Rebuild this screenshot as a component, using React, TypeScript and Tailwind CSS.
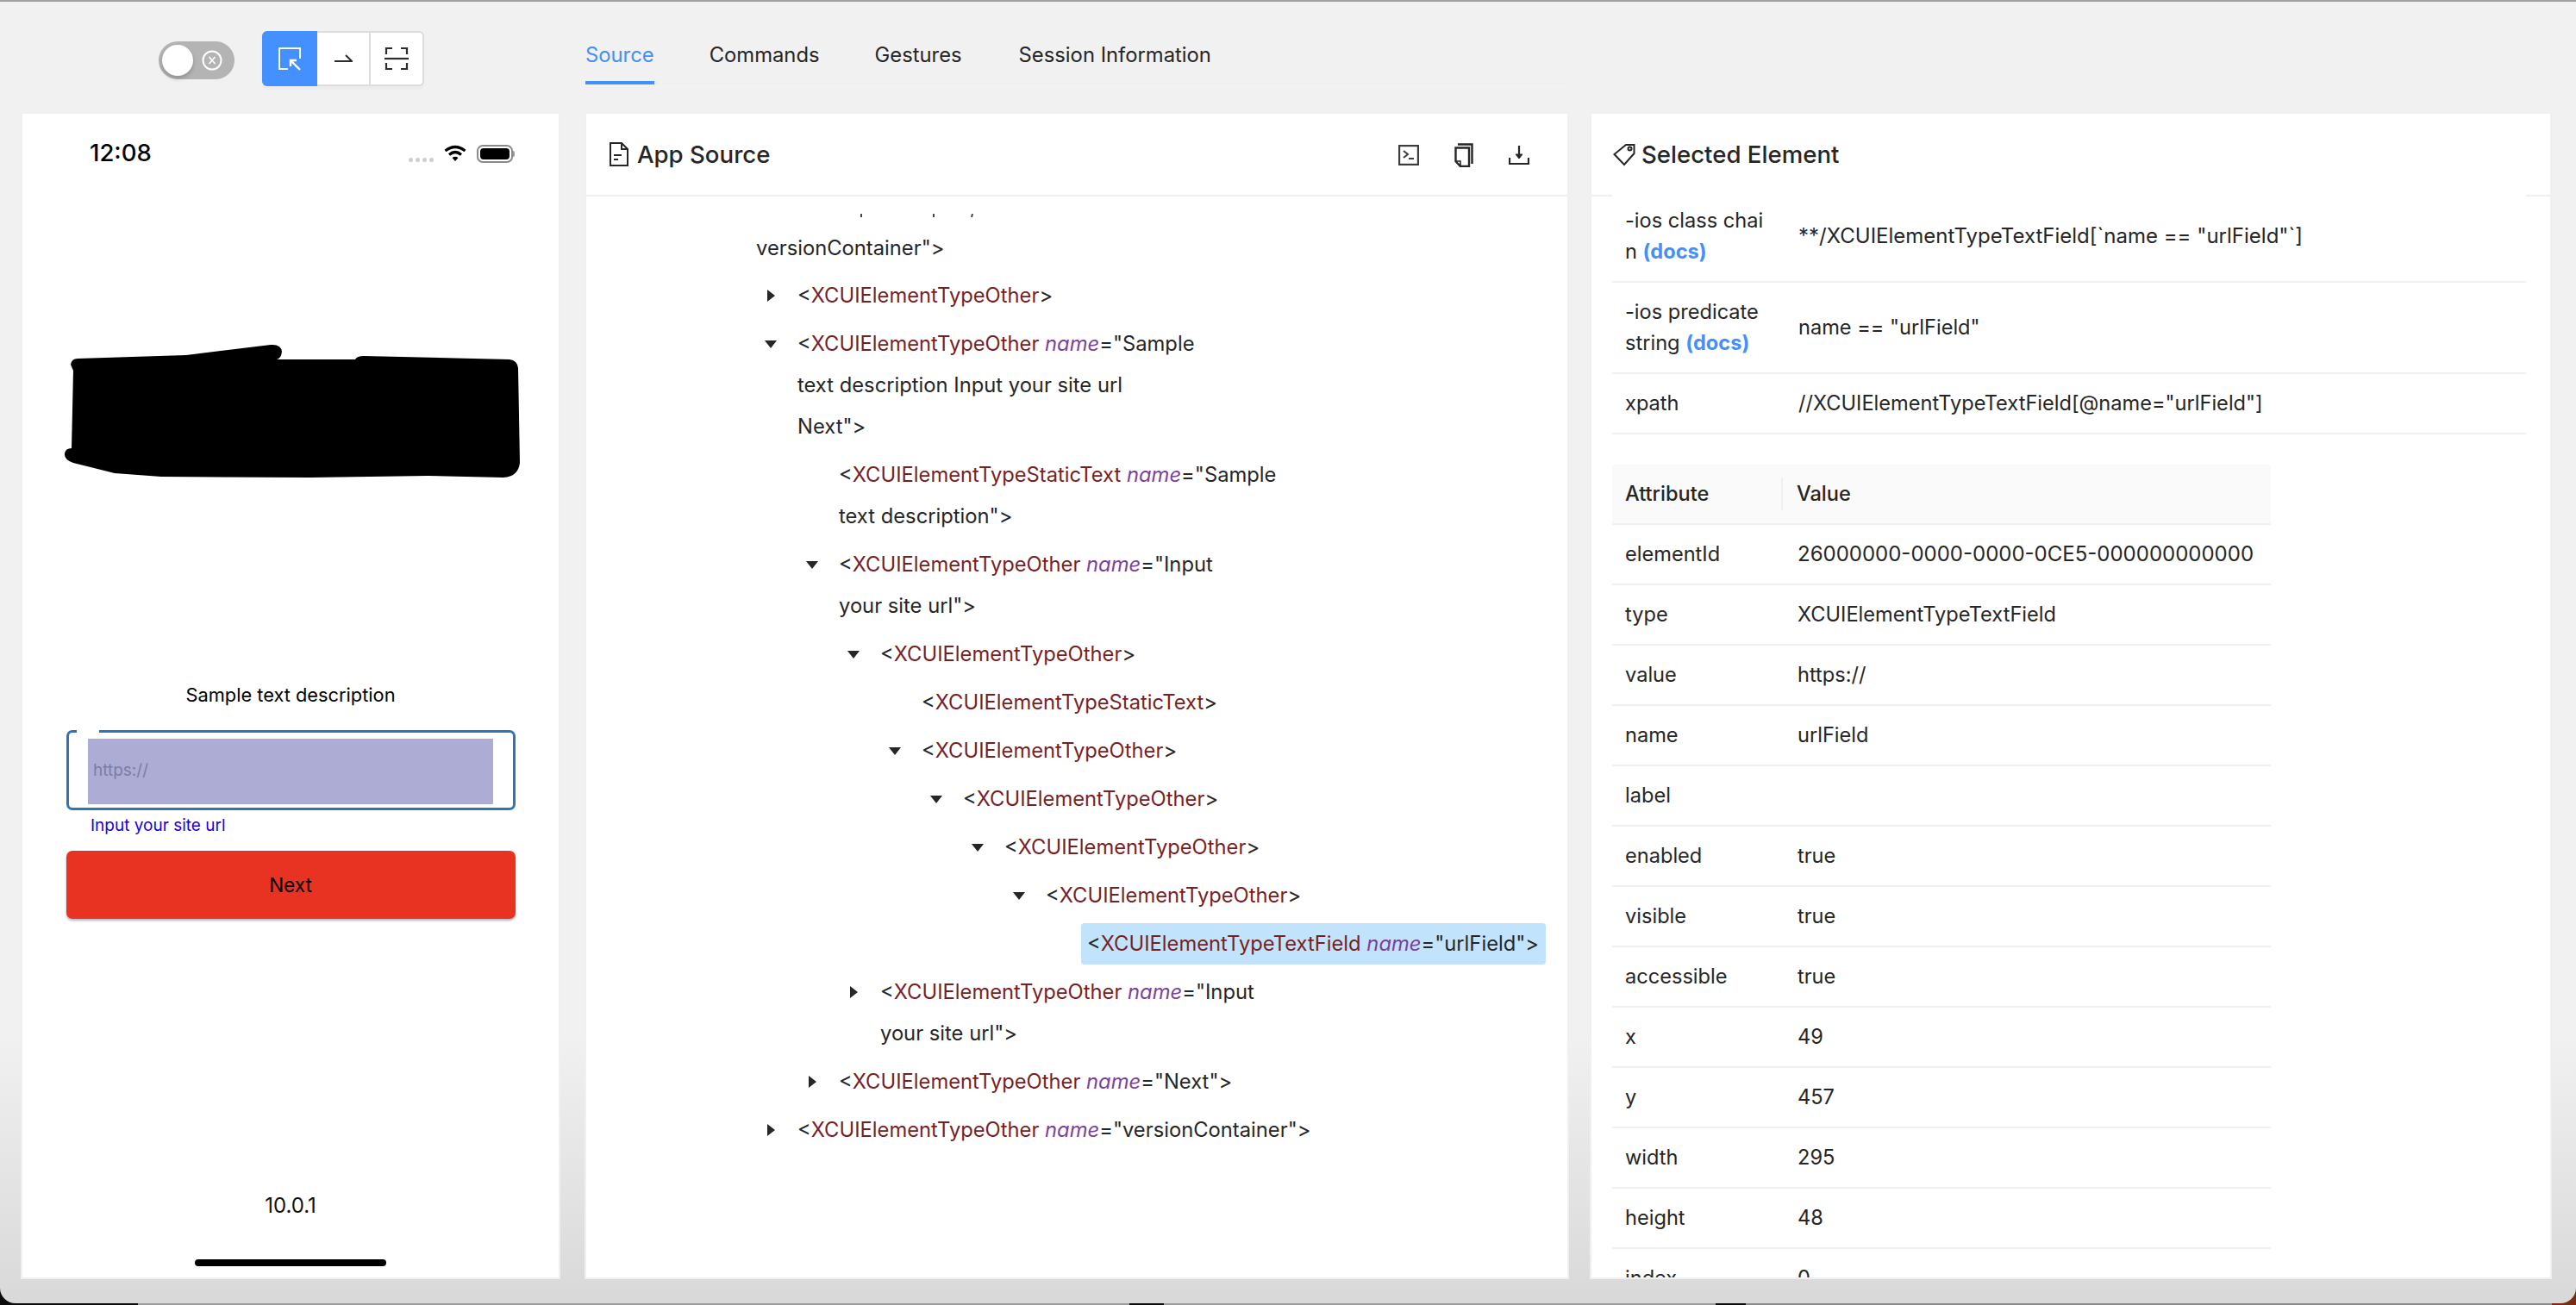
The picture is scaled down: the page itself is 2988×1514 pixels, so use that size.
const indent = [
  'ml-[0px]',
  'ml-[48px]',
  'ml-[96px]',
  'ml-[144px]',
  'ml-[192px]',
  'ml-[240px]',
  'ml-[288px]',
  'ml-[336px]',
];

type TreeRowProps = {
  level: number;
  arrow?: 'open' | 'closed';
  tag: string;
  name?: string;
  extra?: string[];
  selected?: boolean;
};

function Tag({ tag, name }: { tag: string; name?: string }) {
  return (
    <>
      &lt;<span className="text-[#791f1f]">{tag}</span>
      {name !== undefined && (
        <>
          {' '}
          <span className="italic text-[#7c3f9e]">name</span>=&quot;{name}
        </>
      )}
    </>
  );
}

function TreeRow({ level, arrow, tag, name, extra, selected }: TreeRowProps) {
  const closesOnFirst = !extra;
  return (
    <div className={`flex py-[4px] ${indent[level]}`}>
      <div className="flex h-[48px] w-[34px] shrink-0 items-center justify-center">
        {arrow === 'closed' && <div className="h-0 w-0 border-y-[7px] border-l-[9px] border-y-transparent border-l-[#262626]" />}
        {arrow === 'open' && <div className="h-0 w-0 border-x-[7px] border-t-[9px] border-x-transparent border-t-[#262626]" />}
      </div>
      <div className={selected ? 'ml-[7px] rounded-[4px] bg-[#c1e4fc] px-[7px] pr-[8px] leading-[48px]' : 'ml-[14px] leading-[48px]'}>
        <div>
          <Tag tag={tag} name={name} />
          {closesOnFirst ? (name !== undefined ? '">' : '>') : ''}
        </div>
        {extra?.map((line) => (
          <div key={line}>{line}</div>
        ))}
      </div>
    </div>
  );
}

function SourceTree() {
  return (
    <div className="h-full overflow-hidden pl-[197px] text-[23.75px] text-[#262626]">
      <svg className="ml-[120px] mt-[20px] block" width="136" height="5" viewBox="0 0 136 5">
        <path d="M2 0v4M86 0v4M131 0l-1 4" stroke="#444" strokeWidth="2" fill="none" />
      </svg>
      <div className="pb-[3px] pt-[11px] leading-[48px]">versionContainer&quot;&gt;</div>
      <TreeRow level={0} arrow="closed" tag="XCUIElementTypeOther" />
      <TreeRow level={0} arrow="open" tag="XCUIElementTypeOther" name="Sample" extra={['text description Input your site url', 'Next">']} />
      <TreeRow level={1} tag="XCUIElementTypeStaticText" name="Sample" extra={['text description">']} />
      <TreeRow level={1} arrow="open" tag="XCUIElementTypeOther" name="Input" extra={['your site url">']} />
      <TreeRow level={2} arrow="open" tag="XCUIElementTypeOther" />
      <TreeRow level={3} tag="XCUIElementTypeStaticText" />
      <TreeRow level={3} arrow="open" tag="XCUIElementTypeOther" />
      <TreeRow level={4} arrow="open" tag="XCUIElementTypeOther" />
      <TreeRow level={5} arrow="open" tag="XCUIElementTypeOther" />
      <TreeRow level={6} arrow="open" tag="XCUIElementTypeOther" />
      <TreeRow level={7} tag="XCUIElementTypeTextField" name="urlField" selected />
      <TreeRow level={2} arrow="closed" tag="XCUIElementTypeOther" name="Input" extra={['your site url">']} />
      <TreeRow level={1} arrow="closed" tag="XCUIElementTypeOther" name="Next" />
      <TreeRow level={0} arrow="closed" tag="XCUIElementTypeOther" name="versionContainer" />
    </div>
  );
}

const attributes = [
  ['elementId', '26000000-0000-0000-0CE5-000000000000'],
  ['type', 'XCUIElementTypeTextField'],
  ['value', 'https://'],
  ['name', 'urlField'],
  ['label', ''],
  ['enabled', 'true'],
  ['visible', 'true'],
  ['accessible', 'true'],
  ['x', '49'],
  ['y', '457'],
  ['width', '295'],
  ['height', '48'],
  ['index', '0'],
];

function Docs() {
  return <span className="font-bold text-[#4590f8]">(docs)</span>;
}

function SelectedElement() {
  return (
    <div className="h-full overflow-hidden pl-[24px] pr-[28px] text-[23.6px] leading-[36px] text-[#262626]">
      <div className="flex items-center border-b-2 border-[#f0f0f0] pb-[16px] pt-[10px]">
        <div className="w-[198px] shrink-0 px-[15px]">
          <div>-ios class chai</div>
          <div>
            n <Docs />
          </div>
        </div>
        <div className="pl-[18px] text-[24px]">**/XCUIElementTypeTextField[`name == &quot;urlField&quot;`]</div>
      </div>
      <div className="flex items-center border-b-2 border-[#f0f0f0] py-[16px]">
        <div className="w-[198px] shrink-0 px-[15px]">
          <div>-ios predicate</div>
          <div>
            string <Docs />
          </div>
        </div>
        <div className="pl-[18px]">name == &quot;urlField&quot;</div>
      </div>
      <div className="flex items-center border-b-2 border-[#f0f0f0] py-[16px]">
        <div className="w-[198px] shrink-0 px-[15px]">xpath</div>
        <div className="pl-[18px]">//XCUIElementTypeTextField[@name=&quot;urlField&quot;]</div>
      </div>
      <div className="mt-[35px] w-[764px]">
        <div className="flex h-[70px] items-center rounded-t-[4px] border-b-2 border-[#f0f0f0] bg-[#fafafa] font-medium">
          <div className="h-[38px] w-[198px] shrink-0 border-r-2 border-[#f0f0f0] px-[15px] leading-[38px]">Attribute</div>
          <div className="pl-[16px]">Value</div>
        </div>
        {attributes.map(([key, value]) => (
          <div key={key} className="flex h-[70px] shrink-0 items-center border-b-2 border-[#f0f0f0]">
            <div className="w-[198px] shrink-0 px-[15px]">{key}</div>
            <div className={key === 'elementId' ? 'pl-[17px] text-[24px]' : 'pl-[17px]'}>{value}</div>
          </div>
        ))}
      </div>
    </div>
  );
}

function StatusBar() {
  return (
    <div className="flex h-[92px] w-full items-center justify-between pl-[78px] pr-[51px]">
      <span className="text-[27.5px] font-medium text-black">12:08</span>
      <div className="flex items-center">
        <div className="mt-[15px] flex gap-[3px]">
          <div className="h-[5px] w-[5px] rounded-full bg-[#cfcfcf]" />
          <div className="h-[5px] w-[5px] rounded-full bg-[#cfcfcf]" />
          <div className="h-[5px] w-[5px] rounded-full bg-[#cfcfcf]" />
          <div className="h-[5px] w-[5px] rounded-full bg-[#cfcfcf]" />
        </div>
        <svg className="ml-[12px]" width="26" height="20" viewBox="0 0 26 20" fill="none">
          <path d="M1.5 7Q13 -2 24.5 7" stroke="#000" strokeWidth="3.2" />
          <path d="M6 11.5Q13 5.5 20 11.5" stroke="#000" strokeWidth="3.2" />
          <path d="M9.5 15Q13 12.5 16.5 15L13 19Z" fill="#000" />
        </svg>
        <div className="ml-[12px] h-[21px] w-[42px] rounded-[7px] border-2 border-[#8a8a8a] p-[2px]">
          <div className="h-full w-full rounded-[4px] bg-black" />
        </div>
        <div className="h-[7px] w-[2px] rounded-r-full bg-[#9a9a9a]" />
      </div>
    </div>
  );
}

function PhonePreview() {
  return (
    <div className="flex h-full w-[622px] shrink-0 flex-col items-center bg-white font-['Inter',sans-serif] text-black shadow-[0_0_0_2px_#f0f0f0]">
      <StatusBar />
      <svg className="ml-[34px] mt-[156px] self-start" width="570" height="200" viewBox="0 0 570 200">
        <path
          d="M22 43Q23 36 30 36L156 32L254 20Q266 19 267 28Q266 36 261 37L352 37Q354 33 362 33L531 37Q540 38 541 47L543 157Q541 173 524 174L436 172L300 174L127 173L73 169L25 157Q14 153 15 146Q16 140 23 140L25 50Z"
          fill="#000"
        />
      </svg>
      <div className="mt-[210px] text-[21.8px] leading-[32px]">Sample text description</div>
      <div className="relative ml-[1px] mt-[25px] h-[93px] w-[521px] rounded-[7px] border-[3px] border-[#2f75b5] pb-[4px] pl-[22px] pr-[23px] pt-[7px]">
        <div className="absolute -top-[3px] left-[9px] h-[3px] w-[26px] bg-white" />
        <div className="flex h-full items-center bg-[#adacd4] pb-[1px] pl-[6px] text-[19px] text-[#7d7ca5]">https://</div>
      </div>
      <div className="ml-[79px] mt-[5px] self-start text-[19px] leading-[26px] text-[#1a00e0]">Input your site url</div>
      <div className="mt-[16px] flex h-[79px] w-[521px] items-center justify-center rounded-[7px] bg-[#e83323] text-[22.5px] shadow-[0_2px_3px_rgba(0,0,0,0.3)]">
        Next
      </div>
      <div className="mt-[317px] text-[24px] leading-[32px] text-[#111]">10.0.1</div>
      <div className="mt-[46px] h-[8px] w-[222px] rounded-full bg-black" />
    </div>
  );
}

function Panel({ width, icon, title, actions, splitLine, children }: { width: string; icon: React.ReactNode; title: string; actions?: React.ReactNode; splitLine?: boolean; children: React.ReactNode }) {
  return (
    <div className={`flex h-full shrink-0 flex-col bg-white shadow-[0_0_0_2px_#f0f0f0] ${width}`}>
      <div className="flex h-[94px] shrink-0 items-center justify-between pl-[27px] pr-[44px] pt-[1px]">
        <div className="flex items-center gap-[10px] text-[27.6px] font-medium text-[#262626]">
          {icon}
          {title}
        </div>
        <div className="flex items-center gap-[41px]">{actions}</div>
      </div>
      {splitLine ? (
        <div className="flex h-[2px] shrink-0 justify-between">
          <div className="w-[24px] bg-[#f0f0f0]" />
          <div className="w-[28px] bg-[#f0f0f0]" />
        </div>
      ) : (
        <div className="h-[2px] shrink-0 bg-[#f0f0f0]" />
      )}
      <div className="min-h-0 flex-1">{children}</div>
    </div>
  );
}

const fileIcon = (
  <svg width="22" height="28" viewBox="0 0 22 28" fill="none" stroke="#262626" strokeWidth="2">
    <path d="M1 1H14L21 8V27H1Z" />
    <path d="M14 1V8H21M5 15H14M5 20H10" />
  </svg>
);

const tagIcon = (
  <svg className="-ml-[2px] -mr-[3px]" width="26" height="28" viewBox="0 0 26 28" fill="none" stroke="#262626" strokeWidth="2">
    <path d="M15 3H24.5V13L13 26L1.5 14Z" />
    <circle cx="19.5" cy="7.5" r="2" />
  </svg>
);

const sourceActions = (
  <>
    <svg width="24" height="24" viewBox="0 0 24 24" fill="none" stroke="#3d3d3d" strokeWidth="2.4">
      <rect x="1" y="1" width="22" height="22" />
      <path d="M6 7L11 11L6 15M12 16H18" strokeWidth="2" />
    </svg>
    <svg width="22" height="28" viewBox="0 0 22 28" fill="none" stroke="#262626" strokeWidth="2.4">
      <path d="M4 1.5H20.5V24" />
      <path d="M1.5 5.5H17V27H7L1.5 21Z" />
      <path d="M1.5 21H7V27" strokeWidth="1.6" />
    </svg>
    <svg width="24" height="23" viewBox="0 0 24 23" fill="none" stroke="#262626" strokeWidth="2.2">
      <path d="M12 1V13M1 15V22H23V15" />
      <path d="M8 11H16L12 16Z" fill="#262626" strokeWidth="1" />
    </svg>
  </>
);

function Toolbar() {
  return (
    <div className="flex h-[130px] shrink-0 items-start pl-[184px]">
      <div className="mt-[46px] flex h-[44px] w-[88px] items-center justify-between rounded-full bg-[#b4b4b4] pl-[4px] pr-[14px]">
        <div className="h-[36px] w-[36px] rounded-full bg-white shadow-[0_3px_5px_rgba(0,0,0,0.2)]" />
        <svg width="24" height="24" viewBox="0 0 24 24" fill="none" stroke="#fff" strokeWidth="2">
          <circle cx="12" cy="12" r="10.5" />
          <path d="M8.5 8L15.5 16M15.5 8L8.5 16" strokeWidth="1.6" />
        </svg>
      </div>
      <div className="ml-[32px] mt-[34px] flex h-[64px] w-[188px] rounded-[6px] border-2 border-[#dcdcdc] bg-white shadow-[0_4px_0_rgba(0,0,0,0.02)]">
        <div className="-m-[2px] mr-0 flex w-[64px] items-center justify-center rounded-l-[6px] bg-[#4590ff]">
          <svg width="28" height="28" viewBox="0 0 28 28" fill="none" stroke="#fff" strokeWidth="2">
            <path d="M12 26H2V2H26V14" />
            <path d="M26 27L16 17" strokeWidth="2.4" />
            <path d="M15 23V16H22" strokeWidth="2.4" />
          </svg>
        </div>
        <div className="flex w-[62px] items-center justify-center border-r-2 border-[#dcdcdc]">
          <svg width="22" height="10" viewBox="0 0 22 10" fill="none" stroke="#2c2c2c" strokeWidth="2">
            <path d="M1 8H21L14 1" />
          </svg>
        </div>
        <div className="flex flex-1 items-center justify-center">
          <svg width="28" height="26" viewBox="0 0 28 26" fill="none" stroke="#2c2c2c" strokeWidth="2.2">
            <path d="M2 8V1H9M19 1H26V8M2 18V25H9M19 25H26V18" />
            <path d="M0 13H28" />
          </svg>
        </div>
      </div>
      <div className="ml-[187px] mt-[44px] w-[1140px] border-b-2 border-[#efefef] text-[23.8px] leading-[36px] text-[#262626]">
        <div className="flex gap-[64px]">
          <div className="-mb-[2px] border-b-4 border-[#4590f8] pb-[12px] text-[#4590f8]">Source</div>
          <div>Commands</div>
          <div>Gestures</div>
          <div className="ml-[2px]">Session Information</div>
        </div>
      </div>
    </div>
  );
}

export default function App() {
  return (
    <div className="h-[1514px] w-[2988px] overflow-hidden bg-[linear-gradient(90deg,#0c0c0c_160px,#9c9c9c_160px,#9c9c9c_1310px,#0c0c0c_1310px,#0c0c0c_1350px,#9c9c9c_1350px,#9c9c9c_1990px,#0c0c0c_1990px,#0c0c0c_2025px,#8a8a8a_2025px,#8a8a8a_2960px,#7a2c12_2960px)] font-['Inter',sans-serif]">
      <div className="flex h-[1512px] flex-col rounded-b-[18px] bg-[linear-gradient(180deg,#f1f1f1_0px,#f1f1f1_1200px,#d9d9d9_1505px)]">
        <div className="h-[2px] shrink-0 bg-[#a0a0a0]" />
        <Toolbar />
        <div className="flex h-[1350px] shrink-0 gap-[32px] pl-[26px]">
          <PhonePreview />
          <Panel width="w-[1138px]" icon={fileIcon} title="App Source" actions={sourceActions}>
            <SourceTree />
          </Panel>
          <Panel width="-ml-[4px] w-[1112px]" icon={tagIcon} title="Selected Element" splitLine>
            <SelectedElement />
          </Panel>
        </div>
      </div>
    </div>
  );
}
